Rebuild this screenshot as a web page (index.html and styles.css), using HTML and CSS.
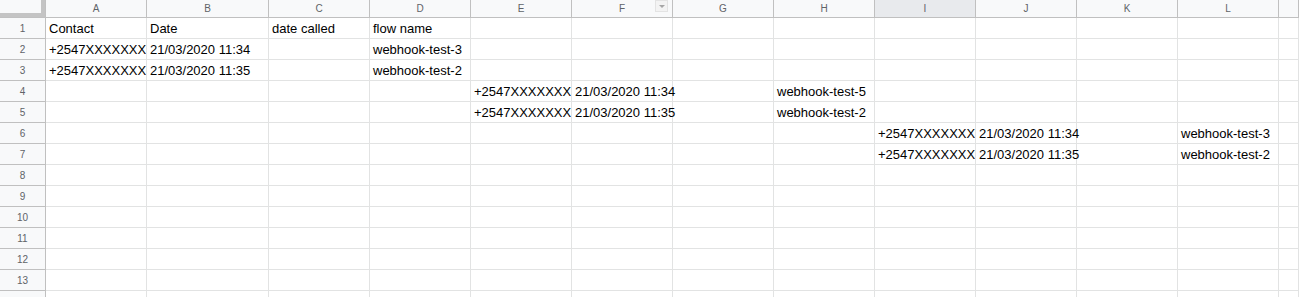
FILE: index.html
```html
<!DOCTYPE html>
<html>
	<head>
		<meta charset="UTF-8">
		<title>Sheet1</title>
		<link rel="stylesheet" href="styles.css">
	</head>
	<body>
		<table class="sheet">
			<colgroup>
				<col class="c-rowhead">
				<col class="c-std">
				<col class="c-wide">
				<col class="c-std"><col class="c-std"><col class="c-std"><col class="c-std"><col class="c-std">
				<col class="c-std"><col class="c-std"><col class="c-std"><col class="c-std"><col class="c-std">
				<col class="c-edge">
			</colgroup>
			<thead>
				<tr>
					<th class="corner"></th>
					<th>A</th><th>B</th><th>C</th><th>D</th><th>E</th>
					<th class="has-filter">F<span class="filter"></span></th>
					<th>G</th><th>H</th>
					<th class="selected">I</th>
					<th>J</th><th>K</th><th>L</th><th></th>
				</tr>
			</thead>
			<tbody>
				<tr>
					<th>1</th>
					<td>Contact</td><td>Date</td><td>date called</td><td>flow name</td>
					<td></td><td></td><td></td><td></td><td></td><td></td><td></td><td></td><td></td>
				</tr>
				<tr>
					<th>2</th>
					<td>+2547XXXXXXXX</td><td>21/03/2020 11:34</td><td></td><td>webhook-test-3</td>
					<td></td><td></td><td></td><td></td><td></td><td></td><td></td><td></td><td></td>
				</tr>
				<tr>
					<th>3</th>
					<td>+2547XXXXXXXX</td><td>21/03/2020 11:35</td><td></td><td>webhook-test-2</td>
					<td></td><td></td><td></td><td></td><td></td><td></td><td></td><td></td><td></td>
				</tr>
				<tr>
					<th>4</th>
					<td></td><td></td><td></td><td></td>
					<td>+2547XXXXXXXX</td><td class="spill">21/03/2020 11:34</td><td></td><td>webhook-test-5</td>
					<td></td><td></td><td></td><td></td><td></td>
				</tr>
				<tr>
					<th>5</th>
					<td></td><td></td><td></td><td></td>
					<td>+2547XXXXXXXX</td><td class="spill">21/03/2020 11:35</td><td></td><td>webhook-test-2</td>
					<td></td><td></td><td></td><td></td><td></td>
				</tr>
				<tr>
					<th>6</th>
					<td></td><td></td><td></td><td></td><td></td><td></td><td></td><td></td>
					<td>+2547XXXXXXXX</td><td class="spill">21/03/2020 11:34</td><td></td><td>webhook-test-3</td>
					<td></td>
				</tr>
				<tr>
					<th>7</th>
					<td></td><td></td><td></td><td></td><td></td><td></td><td></td><td></td>
					<td>+2547XXXXXXXX</td><td class="spill">21/03/2020 11:35</td><td></td><td>webhook-test-2</td>
					<td></td>
				</tr>
				<tr><th>8</th><td></td><td></td><td></td><td></td><td></td><td></td><td></td><td></td><td></td><td></td><td></td><td></td><td></td></tr>
				<tr><th>9</th><td></td><td></td><td></td><td></td><td></td><td></td><td></td><td></td><td></td><td></td><td></td><td></td><td></td></tr>
				<tr><th>10</th><td></td><td></td><td></td><td></td><td></td><td></td><td></td><td></td><td></td><td></td><td></td><td></td><td></td></tr>
				<tr><th>11</th><td></td><td></td><td></td><td></td><td></td><td></td><td></td><td></td><td></td><td></td><td></td><td></td><td></td></tr>
				<tr><th>12</th><td></td><td></td><td></td><td></td><td></td><td></td><td></td><td></td><td></td><td></td><td></td><td></td><td></td></tr>
				<tr><th>13</th><td></td><td></td><td></td><td></td><td></td><td></td><td></td><td></td><td></td><td></td><td></td><td></td><td></td></tr>
				<tr><th>14</th><td></td><td></td><td></td><td></td><td></td><td></td><td></td><td></td><td></td><td></td><td></td><td></td><td></td></tr>
			</tbody>
		</table>
	</body>
</html>
```

FILE: styles.css
```css
html, body {
	margin: 0;
	height: 100%;
	overflow: hidden;
	background: #fff;
	font-family: "Liberation Sans", Arial, sans-serif;
}

.sheet {
	table-layout: fixed;
	width: 1299px;
	border-collapse: separate;
	border-spacing: 0;
}

.c-rowhead { width: 46px; }
.c-std { width: 101px; }
.c-wide { width: 122px; }
.c-edge { width: 20px; }

.sheet th,
.sheet td {
	box-sizing: border-box;
	padding: 0;
	white-space: nowrap;
	overflow: hidden;
}

/* column letters */
.sheet thead tr {
	height: 18px;
}

.sheet thead th {
	position: relative;
	background: #f8f9fa;
	border-right: 1px solid #c0c0c0;
	border-bottom: 1px solid #c0c0c0;
	font-size: 10px;
	font-weight: normal;
	color: #5f6368;
	text-align: center;
	vertical-align: middle;
	line-height: 17px;
}

.sheet thead th.selected {
	background: #e8eaed;
}

.sheet thead th.corner {
	box-shadow: inset -4px -4px 0 #c4c4c4;
}

.filter {
	position: absolute;
	top: 0;
	right: 4px;
	width: 13px;
	height: 12px;
	box-sizing: border-box;
	border: 1px solid #e3e3e3;
	background: #f3f3f3;
}

.filter:after {
	content: "";
	position: absolute;
	left: 3px;
	top: 4px;
	border-left: 3px solid transparent;
	border-right: 3px solid transparent;
	border-top: 3px solid #a6a6a6;
}

/* rows */
.sheet tbody tr {
	height: 21px;
}

.sheet tbody th {
	background: #f8f9fa;
	border-right: 1px solid #c0c0c0;
	border-bottom: 1px solid #c0c0c0;
	font-size: 10px;
	font-weight: normal;
	color: #5f6368;
	text-align: center;
	vertical-align: middle;
}

.sheet td {
	border-right: 1px solid #e2e3e3;
	border-bottom: 1px solid #e2e3e3;
	font-size: 13px;
	line-height: 16px;
	color: #000;
	padding: 0 3px 1px;
	vertical-align: bottom;
}

/* text runs on into the empty cell beside it */
.sheet td.spill {
	overflow: visible;
}
```
